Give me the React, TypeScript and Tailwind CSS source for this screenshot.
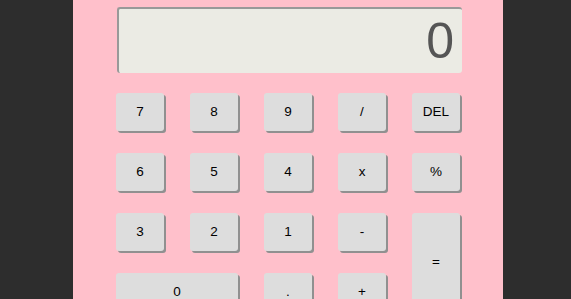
const keys: { label: string; cls?: string }[] = [
  { label: '7' }, { label: '8' }, { label: '9' }, { label: '/' }, { label: 'DEL' },
  { label: '6' }, { label: '5' }, { label: '4' }, { label: 'x' }, { label: '%' },
  { label: '3' }, { label: '2' }, { label: '1' }, { label: '-' }, { label: '=', cls: 'row-span-2' },
  { label: '0', cls: 'col-span-2' }, { label: '.' }, { label: '+' },
];

export default function App() {
  return (
    <div className="min-h-screen bg-[#2d2d2d] font-['Liberation_Sans',Arial,sans-serif]">
      <div className="ml-[73px] w-[430px] min-h-screen bg-[#ffc0cb] pl-[43px] pt-[7px]">
        {/* display */}
        <div className="ml-[1px] flex h-[66px] w-[345px] items-center justify-end rounded-[3px] border-l-2 border-t-2 border-[#999] bg-[#ebebe4] pr-[8px] text-[50px] leading-none text-[#555]">
          0
        </div>

        {/* keypad */}
        <div className="mt-[20px] grid grid-cols-[repeat(5,48px)] auto-rows-[38px] gap-x-[26px] gap-y-[22px]">
          {keys.map((k) => (
            <button
              key={k.label}
              className={`flex items-center justify-center rounded-[3px] bg-[#dddddd] text-[13.5px] text-black shadow-[2px_2px_0_#909090] ${k.cls ?? ''}`}
            >
              {k.label}
            </button>
          ))}
        </div>
      </div>
    </div>
  );
}
